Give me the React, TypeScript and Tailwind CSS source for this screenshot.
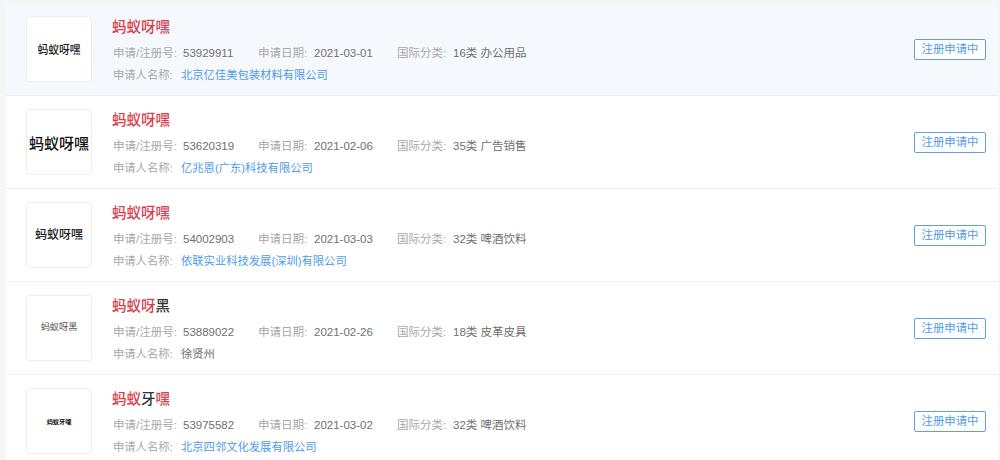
const rows = [
  { bg: 'bg-[#f5f9fe]', logo: '蚂蚁呀嘿', logoClass: 'text-[10.8px] font-medium text-[#222] pt-[3px]', title: [['蚂蚁呀嘿', true]], no: '53929911', date: '2021-03-01', cls: '16类 办公用品', owner: '北京亿佳美包装材料有限公司', link: true },
  { bg: 'bg-white', logo: '蚂蚁呀嘿', logoClass: 'text-[15px] font-medium text-[#111] pt-[5px]', title: [['蚂蚁呀嘿', true]], no: '53620319', date: '2021-02-06', cls: '35类 广告销售', owner: '亿兆恩(广东)科技有限公司', link: true },
  { bg: 'bg-white', logo: '蚂蚁呀嘿', logoClass: 'text-[12px] font-medium text-[#222]', title: [['蚂蚁呀嘿', true]], no: '54002903', date: '2021-03-03', cls: '32类 啤酒饮料', owner: '依联实业科技发展(深圳)有限公司', link: true },
  { bg: 'bg-white', logo: '蚂蚁呀黑', logoClass: 'text-[9.2px] text-[#555]', title: [['蚂蚁呀', true], ['黑', false]], no: '53889022', date: '2021-02-26', cls: '18类 皮革皮具', owner: '徐贤州', link: false },
  { bg: 'bg-white', logo: '蚂蚁牙嘿', logoClass: 'text-[6.2px] font-bold text-[#111] pt-[2px]', title: [['蚂蚁', true], ['牙', false], ['嘿', true]], no: '53975582', date: '2021-03-02', cls: '32类 啤酒饮料', owner: '北京四邻文化发展有限公司', link: true },
] as const;

const font = "font-['Liberation_Sans','Noto_Sans_CJK_SC',sans-serif]";

export default function App() {
  return (
    <div className={`h-[460px] w-[1000px] overflow-hidden bg-[#f6f6f6] pl-[6px] pr-[2px] pt-[3px] ${font}`}>
      {rows.map((r) => (
        <div key={r.no} className={`flex h-[93px] items-center border-b border-[#eeeeee] pl-5 pr-3 ${r.bg}`}>
          <div className="flex h-[66px] w-[66px] shrink-0 items-center justify-center rounded border border-[#eeeeee] bg-white">
            <span className={`whitespace-nowrap ${r.logoClass}`}>{r.logo}</span>
          </div>
          <div className="ml-5 flex-1 pt-[3px]">
            <div className="text-[14.5px] font-medium leading-[20px]">
              {r.title.map(([t, hit]) => (
                <span key={t} className={hit ? 'text-[#d9404e]' : 'text-[#333333]'}>{t}</span>
              ))}
            </div>
            <div className="mt-[6px] flex pl-px text-[11.5px] leading-[20px] text-[#a8a8a8]">
              <span className="w-[70px]">申请/注册号:</span>
              <span className="w-[75px] text-[#707070]">{r.no}</span>
              <span className="w-[56px]">申请日期:</span>
              <span className="w-[83px] text-[#707070]">{r.date}</span>
              <span className="w-[56px]">国际分类:</span>
              <span className="text-[#707070]">{r.cls}</span>
            </div>
            <div className="mt-[2px] flex pl-px text-[11.3px] leading-[20px] text-[#a8a8a8]">
              <span className="w-[68px]">申请人名称:</span>
              <span className={r.link ? 'text-[#4f9bea]' : 'text-[#707070]'}>{r.owner}</span>
            </div>
          </div>
          <div className="mt-px flex h-[21px] w-[72px] items-center justify-center rounded-[2px] border border-[#5f9fe3] bg-white text-[11.4px] text-[#4f9bea]">
            注册申请中
          </div>
        </div>
      ))}
    </div>
  );
}
